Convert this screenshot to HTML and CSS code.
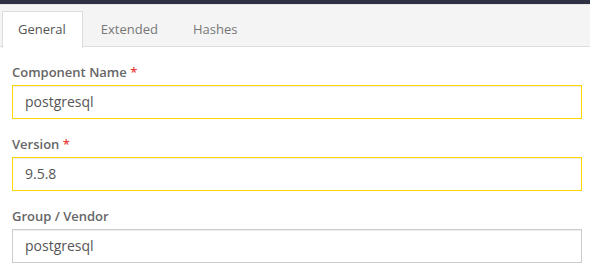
FILE: index.html
```
<!DOCTYPE html>
<html>
<head>
<meta charset="utf-8">
<link rel="stylesheet" href="styles.css">
</head>
<body>
<div class="topbar"></div>
<div class="tabbar">
  <ul class="tabs">
    <li class="tab active">General</li>
    <li class="tab">Extended</li>
    <li class="tab">Hashes</li>
  </ul>
</div>
<div class="content">
  <div class="group">
    <label class="label">Component Name <span class="req">*</span></label>
    <div class="input warn">postgresql</div>
  </div>
  <div class="group">
    <label class="label">Version <span class="req">*</span></label>
    <div class="input warn">9.5.8</div>
  </div>
  <div class="group">
    <label class="label">Group / Vendor</label>
    <div class="input">postgresql</div>
  </div>
</div>
</body>
</html>
```
FILE: styles.css
```
html, body {
  margin: 0;
  padding: 0;
  background: #fff;
  font-family: "Open Sans", "Liberation Sans", sans-serif;
}
.topbar {
  height: 4px;
  background: #2f3142;
  border-bottom: 1px solid #e6e6e6;
}
.tabbar {
  background: #f4f4f4;
  border-bottom: 1px solid #dddddd;
  height: 41px;
}
.tabs {
  list-style: none;
  margin: 0;
  padding: 6px 0 0 2px;
  display: flex;
  gap: 2px;
}
.tab {
  height: 35px;
  line-height: 35px;
  padding: 0 16px 0 15px;
  font-size: 13px;
  color: #777;
  border: 1px solid transparent;
  border-bottom: none;
}
.tab.active {
  background: #fff;
  color: #555;
  border-color: #dddddd;
  height: 36px;
}
.content {
  padding: 16px 8px 0 12px;
}
.group {
  margin-bottom: 16px;
}
.label {
  display: block;
  font-size: 13px;
  font-weight: 600;
  color: #666;
  line-height: 18px;
  margin-bottom: 4px;
}
.req {
  color: #e8413c;
}
.input {
  box-sizing: border-box;
  height: 34px;
  line-height: 32px;
  border: 1px solid #cccccc;
  padding: 0 12px;
  font-size: 14px;
  color: #555;
  box-shadow: inset 0 1px 1px rgba(0,0,0,0.075);
}
.input.warn {
  border-color: #fdd700;
}
```
